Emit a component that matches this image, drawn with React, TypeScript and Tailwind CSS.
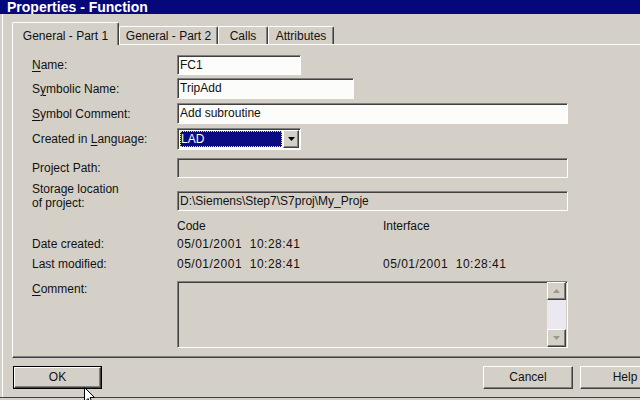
import React from 'react';

// classic win9x bevels
const sunken =
  'border border-t-[#808080] border-l-[#808080] border-b-white border-r-white shadow-[inset_1px_1px_0_#404040]';
const raised =
  'border border-t-white border-l-white border-b-[#404040] border-r-[#404040] shadow-[inset_-1px_-1px_0_#808080]';

const U: React.FC<{ children: React.ReactNode }> = ({ children }) => (
  <span className="underline underline-offset-[2px] decoration-1">{children}</span>
);

const Row: React.FC<{ label: React.ReactNode; className?: string; children?: React.ReactNode }> = ({
  label,
  className = '',
  children,
}) => (
  <div className={`flex items-center shrink-0 ${className}`}>
    <div className="w-[145px] shrink-0 leading-[14px]">{label}</div>
    {children}
  </div>
);

const Arrow: React.FC<{ up?: boolean; color?: string }> = ({ up, color = '#000' }) => (
  <svg width="7" height="4" viewBox="0 0 7 4">
    <path d={up ? 'M3.5 0 L7 4 L0 4 Z' : 'M0 0 L7 0 L3.5 4 Z'} fill={color} />
  </svg>
);

const Tab: React.FC<{ label: string; width: string; active?: boolean }> = ({ label, width, active }) =>
  active ? (
    <div
      className={`${width} h-[23px] -mb-px relative z-10 bg-[#d4d0c8] border-t border-l border-white border-r border-r-[#404040] rounded-t-[2px] shadow-[inset_-1px_0_0_#808080] text-center pt-[6px] leading-[14px]`}
    >
      {label}
    </div>
  ) : (
    <div
      className={`${width} h-[18px] border-t border-l border-white border-r border-r-[#404040] rounded-t-[2px] shadow-[inset_-1px_0_0_#808080] text-center pt-[2px] leading-[14px]`}
    >
      {label}
    </div>
  );

const Stamp = () => <span className="whitespace-pre tracking-[0.5px]">05/01/2001  10:28:41</span>;

export default function App() {
  return (
    <div className="w-[640px] h-[400px] overflow-hidden relative bg-[#d4d0c8] text-[12px] text-[#111] font-['Liberation_Sans',Arial,sans-serif] flex flex-col">
      {/* title bar */}
      <div className="h-[14px] shrink-0 bg-[#07077c] text-white font-bold text-[14px] leading-[14px] pl-[7px] overflow-hidden">
        Properties - Function
      </div>

      <div className="flex-1 flex flex-col ml-[2px] border-l border-white pl-[9px]">
        {/* tabs */}
        <div className="flex items-end h-[30px] pt-[8px] shrink-0">
          <Tab label="General - Part 1" width="w-[107px]" active />
          <Tab label="General - Part 2" width="w-[99px]" />
          <Tab label="Calls" width="w-[50px]" />
          <Tab label="Attributes" width="w-[66px]" />
        </div>

        {/* tab panel */}
        <div className="w-[680px] h-[314px] shrink-0 flex flex-col border-t border-l border-white border-b border-b-[#404040] shadow-[inset_0_-1px_0_#808080] pl-[19px] pt-[10px]">
          <Row label={<><U>N</U>ame:</>}>
            <div className={`${sunken} w-[124px] h-[20px] bg-[#fcfcfa] pl-[2px] leading-[18px]`}>FC1</div>
          </Row>
          <Row label={<>S<U>y</U>mbolic Name:</>} className="mt-[3px]">
            <div className={`${sunken} w-[177px] h-[21px] bg-[#fcfcfa] pl-[2px] leading-[19px]`}>TripAdd</div>
          </Row>
          <Row label={<><U>S</U>ymbol Comment:</>} className="mt-[4px]">
            <div className={`${sunken} w-[391px] h-[21px] bg-[#fcfcfa] pl-[2px] leading-[19px]`}>
              Add subroutine
            </div>
          </Row>
          <Row label={<>Created in <U>L</U>anguage:</>} className="mt-[4px]">
            <div className={`${sunken} w-[124px] h-[22px] bg-[#fcfcfa] flex items-center pl-[2px] pr-[1px]`}>
              <div className="flex-1 h-[16px] bg-[#0a0a82] outline-1 outline-dotted outline-[#e8e0a0] -outline-offset-1 text-white leading-[16px] pl-[1px]">
                LAD
              </div>
              <div className={`${raised} w-[16px] h-[18px] ml-[1px] bg-[#d4d0c8] flex items-center justify-center`}>
                <Arrow />
              </div>
            </div>
          </Row>
          <Row label="Project Path:" className="mt-[8px]">
            <div className={`${sunken} w-[391px] h-[20px]`} />
          </Row>
          <div className="flex items-end shrink-0 mt-[3px] h-[30px]">
            <div className="w-[145px] shrink-0 leading-[14px] pb-[1px]">
              Storage location
              <br />
              of project:
            </div>
            <div className={`${sunken} w-[391px] h-[20px] pl-[2px] leading-[18px]`}>
              D:\Siemens\Step7\S7proj\My_Proje
            </div>
          </div>
          <Row label="" className="mt-[8px]">
            <div className="w-[206px] leading-[14px]">Code</div>
            <div className="leading-[14px]">Interface</div>
          </Row>
          <Row label="Date created:" className="mt-[4px]">
            <div className="w-[206px] leading-[14px]">
              <Stamp />
            </div>
          </Row>
          <Row label="Last modified:" className="mt-[6px]">
            <div className="w-[206px] leading-[14px]">
              <Stamp />
            </div>
            <div className="leading-[14px]">
              <Stamp />
            </div>
          </Row>
          <div className="flex items-start shrink-0 mt-[10px]">
            <div className="w-[145px] shrink-0 leading-[14px] pt-[1px]">
              <U>C</U>omment:
            </div>
            <div className={`${sunken} w-[391px] h-[67px] flex justify-end pr-px`}>
              <div className="w-[19px] flex flex-col">
                <div className={`${raised} h-[18px] bg-[#d4d0c8] flex items-center justify-center`}>
                  <Arrow up color="#9a9890" />
                </div>
                <div className="flex-1 bg-[#ebe9ef]" />
                <div className={`${raised} h-[18px] bg-[#d4d0c8] flex items-center justify-center`}>
                  <Arrow color="#9a9890" />
                </div>
              </div>
            </div>
          </div>
        </div>

        {/* buttons */}
        <div className="flex shrink-0 mt-[8px] pl-px w-[700px]">
          <div className="w-[89px] h-[23px] border border-black">
            <div className={`${raised} h-full text-center leading-[19px]`}>OK</div>
          </div>
          <div className="w-[381px] shrink-0" />
          <div className={`${raised} w-[90px] h-[23px] text-center leading-[20px]`}>Cancel</div>
          <div className={`${raised} w-[90px] h-[23px] ml-[7px] text-center leading-[20px]`}>Help</div>
        </div>
      </div>

      {/* window bottom edge */}
      <div className="h-[3px] shrink-0 border-t border-[#404040]" />

      {/* mouse pointer */}
      <svg className="absolute left-[84px] top-[387px]" width="12" height="19" viewBox="0 0 12 19">
        <path d="M0.5 0.5 L0.5 15 L4 11.5 L6.5 17.5 L8.5 16.5 L6 10.5 L10.5 10.5 Z" fill="#fff" stroke="#000" strokeWidth="1" />
      </svg>
    </div>
  );
}
